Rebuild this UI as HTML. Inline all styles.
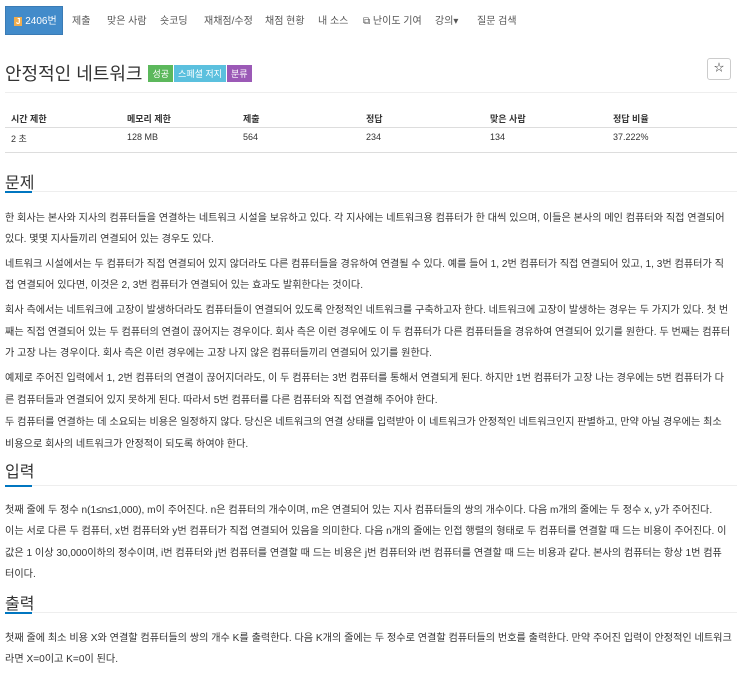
<!DOCTYPE html>
<html><head><meta charset="utf-8"><style>
body{margin:0;width:743px;height:673px;overflow:hidden;background:#fff;font-family:"Liberation Sans","Noto Sans CJK KR",sans-serif;color:#333;font-size:11px;position:relative}
.a{position:absolute;white-space:nowrap}
.nav span{position:absolute;top:12px;font-size:10px;color:#555}
.lbl{display:inline-block;color:#fff;font-size:9px;padding:2px 4px;margin-left:1px;vertical-align:3px}
.p{position:absolute;left:5px;white-space:nowrap;font-size:10.15px;color:#333}
h2{position:absolute;margin:0;font-weight:normal;font-size:16px;color:#333;left:5px}
.ul{position:absolute;left:5px;height:1px;background:#eee;width:732px}
.ul2{position:absolute;left:5px;height:2px;background:#0076c0;width:27px}
</style></head><body>
<div class="nav">
<div class="a" style="left:5px;top:6px;width:56px;height:27px;background:#428bca;border:1px solid #3a7bb5"></div>
<span style="left:14px;color:#fff"><b style="background:#f0ad4e;color:#fff;font-size:8px;padding:0 2px">J</b> 2406번</span>
<span style="left:72px">제출</span><span style="left:107px">맞은 사람</span><span style="left:160px">숏코딩</span><span style="left:204px">재채점/수정</span><span style="left:265px">채점 현황</span><span style="left:318px">내 소스</span><span style="left:363px">⧉ 난이도 기여</span><span style="left:435px">강의▾</span><span style="left:477px">질문 검색</span>
</div>
<div class="a" style="left:5px;top:60px;font-size:18px;color:#333">안정적인 네트워크 <span class="lbl" style="background:#5cb85c">성공</span><span class="lbl" style="background:#5bc0de">스페셜 저지</span><span class="lbl" style="background:#9b59b6">분류</span></div>
<div class="a" style="left:707px;top:58px;width:22px;height:20px;border:1px solid #ccc;border-radius:3px;text-align:center;line-height:20px;font-size:10px">☆</div>
<div class="ul" style="top:92px"></div>
<div style="position:absolute;top:112px;left:5px;width:732px;font-size:9px">
<div class="a" style="left:6px;font-weight:bold">시간 제한</div><div class="a" style="left:122px;font-weight:bold">메모리 제한</div><div class="a" style="left:238px;font-weight:bold">제출</div><div class="a" style="left:361px;font-weight:bold">정답</div><div class="a" style="left:485px;font-weight:bold">맞은 사람</div><div class="a" style="left:608px;font-weight:bold">정답 비율</div>
<div style="position:absolute;top:15px;left:0;width:732px;height:1px;background:#ddd"></div>
<div class="a" style="top:20px;left:6px">2 초</div><div class="a" style="top:20px;left:122px">128 MB</div><div class="a" style="top:20px;left:238px">564</div><div class="a" style="top:20px;left:361px">234</div><div class="a" style="top:20px;left:485px">134</div><div class="a" style="top:20px;left:608px">37.222%</div>
<div style="position:absolute;top:40px;left:0;width:732px;height:1px;background:#ddd"></div>
</div>
<h2 style="top:169px">문제</h2><div class="ul" style="top:191px"></div><div class="ul2" style="top:191px"></div>
<div class="p" style="top:209px">한 회사는 본사와 지사의 컴퓨터들을 연결하는 네트워크 시설을 보유하고 있다. 각 지사에는 네트워크용 컴퓨터가 한 대씩 있으며, 이들은 본사의 메인 컴퓨터와 직접 연결되어</div>
<div class="p" style="top:230px">있다. 몇몇 지사들끼리 연결되어 있는 경우도 있다.</div>
<div class="p" style="top:255px">네트워크 시설에서는 두 컴퓨터가 직접 연결되어 있지 않더라도 다른 컴퓨터들을 경유하여 연결될 수 있다. 예를 들어 1, 2번 컴퓨터가 직접 연결되어 있고, 1, 3번 컴퓨터가 직</div>
<div class="p" style="top:276px">접 연결되어 있다면, 이것은 2, 3번 컴퓨터가 연결되어 있는 효과도 발휘한다는 것이다.</div>
<div class="p" style="top:301px">회사 측에서는 네트워크에 고장이 발생하더라도 컴퓨터들이 연결되어 있도록 안정적인 네트워크를 구축하고자 한다. 네트워크에 고장이 발생하는 경우는 두 가지가 있다. 첫 번</div>
<div class="p" style="top:323px">째는 직접 연결되어 있는 두 컴퓨터의 연결이 끊어지는 경우이다. 회사 측은 이런 경우에도 이 두 컴퓨터가 다른 컴퓨터들을 경유하여 연결되어 있기를 원한다. 두 번째는 컴퓨터</div>
<div class="p" style="top:344px">가 고장 나는 경우이다. 회사 측은 이런 경우에는 고장 나지 않은 컴퓨터들끼리 연결되어 있기를 원한다.</div>
<div class="p" style="top:369px">예제로 주어진 입력에서 1, 2번 컴퓨터의 연결이 끊어지더라도, 이 두 컴퓨터는 3번 컴퓨터를 통해서 연결되게 된다. 하지만 1번 컴퓨터가 고장 나는 경우에는 5번 컴퓨터가 다</div>
<div class="p" style="top:391px">른 컴퓨터들과 연결되어 있지 못하게 된다. 따라서 5번 컴퓨터를 다른 컴퓨터와 직접 연결해 주어야 한다.</div>
<div class="p" style="top:413px">두 컴퓨터를 연결하는 데 소요되는 비용은 일정하지 않다. 당신은 네트워크의 연결 상태를 입력받아 이 네트워크가 안정적인 네트워크인지 판별하고, 만약 아닐 경우에는 최소</div>
<div class="p" style="top:435px">비용으로 회사의 네트워크가 안정적이 되도록 하여야 한다.</div>
<h2 style="top:458px">입력</h2><div class="ul" style="top:485px"></div><div class="ul2" style="top:485px"></div>
<div class="p" style="top:501px">첫째 줄에 두 정수 n(1≤n≤1,000), m이 주어진다. n은 컴퓨터의 개수이며, m은 연결되어 있는 지사 컴퓨터들의 쌍의 개수이다. 다음 m개의 줄에는 두 정수 x, y가 주어진다.</div>
<div class="p" style="top:522px">이는 서로 다른 두 컴퓨터, x번 컴퓨터와 y번 컴퓨터가 직접 연결되어 있음을 의미한다. 다음 n개의 줄에는 인접 행렬의 형태로 두 컴퓨터를 연결할 때 드는 비용이 주어진다. 이</div>
<div class="p" style="top:544px">값은 1 이상 30,000이하의 정수이며, i번 컴퓨터와 j번 컴퓨터를 연결할 때 드는 비용은 j번 컴퓨터와 i번 컴퓨터를 연결할 때 드는 비용과 같다. 본사의 컴퓨터는 항상 1번 컴퓨</div>
<div class="p" style="top:565px">터이다.</div>
<h2 style="top:590px">출력</h2><div class="ul" style="top:612px"></div><div class="ul2" style="top:612px"></div>
<div class="p" style="top:629px">첫째 줄에 최소 비용 X와 연결할 컴퓨터들의 쌍의 개수 K를 출력한다. 다음 K개의 줄에는 두 정수로 연결할 컴퓨터들의 번호를 출력한다. 만약 주어진 입력이 안정적인 네트워크</div>
<div class="p" style="top:650px">라면 X=0이고 K=0이 된다.</div>
</body></html>
